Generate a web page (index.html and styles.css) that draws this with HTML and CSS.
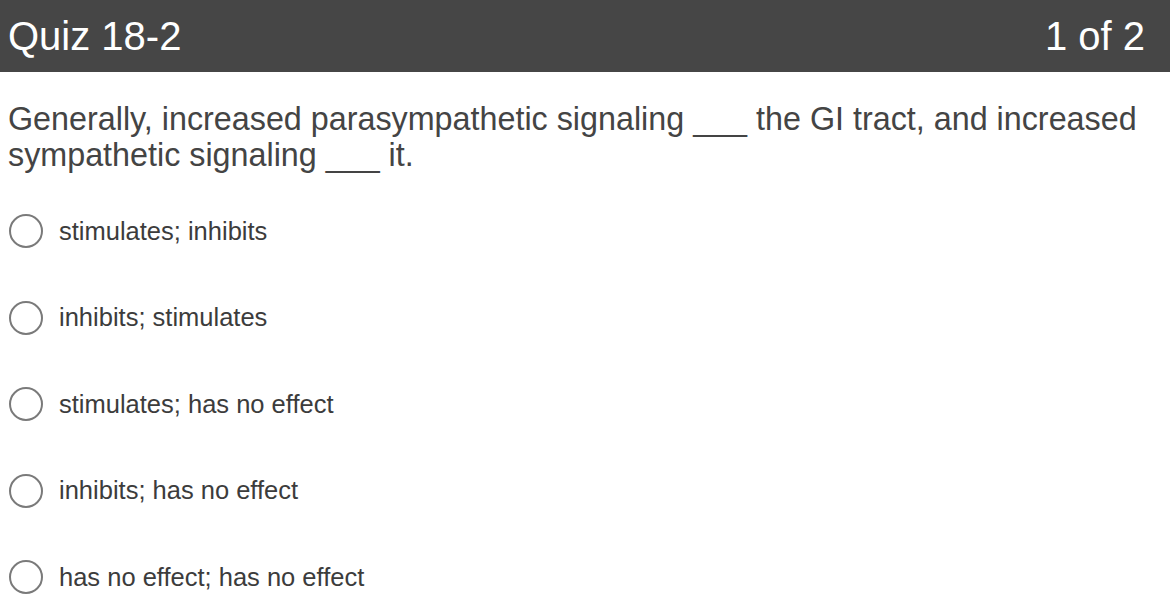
FILE: index.html
```html
<!DOCTYPE html>
<html lang="en">
<head>
  <meta charset="UTF-8">
  <meta name="viewport" content="width=device-width, initial-scale=1.0">
  <title>Quiz 18-2</title>
  <link rel="stylesheet" href="styles.css">
</head>
<body>
  <header class="quiz-bar">
    <h1 class="quiz-title">Quiz 18-2</h1>
    <span class="quiz-count">1 of 2</span>
  </header>

  <main class="quiz-body">
    <p class="question">
      Generally, increased parasympathetic signaling ___ the GI tract, and increased sympathetic signaling ___ it.
    </p>

    <ul class="choices">
      <li class="choice"><span class="radio"></span><span class="choice-text">stimulates; inhibits</span></li>
      <li class="choice"><span class="radio"></span><span class="choice-text">inhibits; stimulates</span></li>
      <li class="choice"><span class="radio"></span><span class="choice-text">stimulates; has no effect</span></li>
      <li class="choice"><span class="radio"></span><span class="choice-text">inhibits; has no effect</span></li>
      <li class="choice"><span class="radio"></span><span class="choice-text">has no effect; has no effect</span></li>
    </ul>
  </main>
</body>
</html>
```

FILE: styles.css
```css
/* Base */
body {
  font-family: "Liberation Sans", Arial, sans-serif;
  background-color: #fff;
  color: #444;
  margin: 0;
  padding: 0;
}

/* Top bar */
.quiz-bar {
  background-color: #464646;
  color: #fff;
  height: 72px;
  display: flex;
  align-items: center;
  justify-content: space-between;
  padding: 0 25px 0 8px;
}
.quiz-title {
  font-size: 40px;
  font-weight: normal;
  margin: 0;
}
.quiz-count {
  font-size: 40px;
}

/* Question and answers */
.quiz-body {
  padding: 0 8px;
}
.question {
  font-size: 32.3px;
  line-height: 36px;
  margin: 29px 0 41px;
  padding-right: 20px;
}
.choices {
  list-style: none;
  margin: 0;
  padding: 0 0 0 1px;
  display: flex;
  flex-direction: column;
  gap: 52.5px;
}
.choice {
  display: flex;
  align-items: center;
  gap: 16px;
  height: 34px;
}
.radio {
  width: 30px;
  height: 30px;
  border: 2px solid #7a7a7a;
  border-radius: 50%;
  flex-shrink: 0;
}
.choice-text {
  font-size: 25.5px;
  color: #3c3c3c;
}
```
